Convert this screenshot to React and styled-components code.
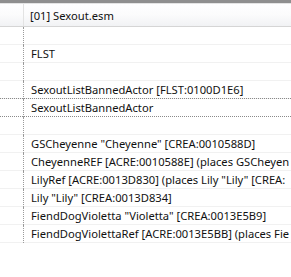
import React from 'react'
import styled, { createGlobalStyle } from 'styled-components'

const GlobalStyle = createGlobalStyle`
    html, body {
        margin: 0;
        padding: 0;
        background: #fff;
        overflow: hidden;
    }
`

const StyledTree = styled.div`
    width: 291px;
    height: 277px;
    overflow: hidden;
    background: #fff;
    font-family: "Noto Sans", "DejaVu Sans", sans-serif;
    font-size: 11.2px;
    color: #111;
    border-top: 3px solid #8f8f8f;
    box-sizing: border-box;
`

const HeaderRow = styled.div`
    display: flex;
    height: 22px;
    background: linear-gradient(#ffffff 0%, #fbfbfc 50%, #f1f2f4 100%);
    border-top: 1px solid #e4e4e4;
    border-bottom: 1px solid #d5d5d5;
`

const HeaderGutter = styled.div`
    width: 23px;
    flex: none;
    border-right: 1px solid #e3e3e3;
`

const HeaderCell = styled.div`
    display: flex;
    align-items: center;
    padding-left: 6px;
    white-space: nowrap;
`

const StyledRow = styled.div`
    display: flex;
    box-sizing: border-box;
    border-bottom: 1px ${p => (p.focused ? 'dotted #8a8a8a' : 'solid #f1f1f1')};
    margin-top: ${p => (p.focused ? '-1px' : '0')};
    border-top: ${p => (p.focused ? '1px dotted #8a8a8a' : 'none')};
    height: ${p => (p.focused ? '19px' : '18px')};
`

const Gutter = styled.div`
    width: 23px;
    flex: none;
    border-right: 1px dotted #9a9a9a;
    margin-bottom: -1px;
`

const Cell = styled.div`
    display: flex;
    align-items: center;
    padding-left: 7px;
    white-space: nowrap;
`

const rows = [
    { text: '' },
    { text: 'FLST' },
    { text: '' },
    { text: 'SexoutListBannedActor [FLST:0100D1E6]' },
    { text: 'SexoutListBannedActor', focused: true },
    { text: '' },
    { text: 'GSCheyenne "Cheyenne" [CREA:0010588D]' },
    { text: 'CheyenneREF [ACRE:0010588E] (places GSCheyen' },
    { text: 'LilyRef [ACRE:0013D830] (places Lily "Lily" [CREA:' },
    { text: 'Lily "Lily" [CREA:0013D834]' },
    { text: 'FiendDogVioletta "Violetta" [CREA:0013E5B9]' },
    { text: 'FiendDogViolettaRef [ACRE:0013E5BB] (places Fie' },
]

const App = () => (
    <>
        <GlobalStyle />
        <StyledTree>
            <HeaderRow>
                <HeaderGutter />
                <HeaderCell>[01] Sexout.esm</HeaderCell>
            </HeaderRow>
            {rows.map((row, i) => (
                <StyledRow key={i} focused={row.focused}>
                    <Gutter />
                    <Cell>{row.text}</Cell>
                </StyledRow>
            ))}
        </StyledTree>
    </>
)

export default App
